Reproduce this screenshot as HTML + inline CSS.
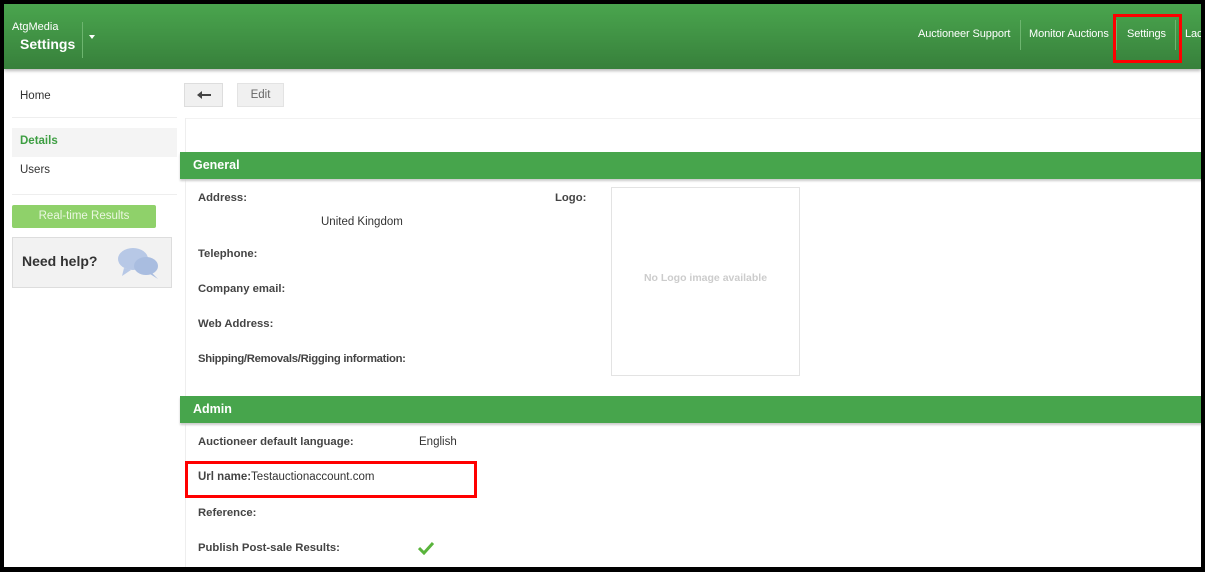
<!DOCTYPE html>
<html><head><style>
*{margin:0;padding:0;box-sizing:border-box}
body{width:1205px;height:572px;overflow:hidden;background:#000;font-family:"Liberation Sans",Arial,sans-serif;position:relative}
.page{position:absolute;left:4px;top:4px;width:1197px;height:563px;background:#fff;overflow:hidden}
.hdr{position:absolute;left:0;top:0;width:1197px;height:65px;background:linear-gradient(#4aa54e,#37803b);box-shadow:0 2px 3px #bbb}
.abs{position:absolute}
.nav{color:#fff;font-size:11px;top:24px;letter-spacing:-0.1px}
.sep{position:absolute;top:16px;width:1px;height:30px;background:#6db56f}
.lbl{position:absolute;font-size:11.3px;font-weight:bold;color:#444}
.val{position:absolute;font-size:11.5px;color:#333}
.bar{position:absolute;left:176px;width:1030px;height:27px;background:#47a54c;color:#fff;font-weight:bold;font-size:12.5px;padding:6px 13px;box-shadow:0 2px 2px #ccc}
.red{position:absolute;border:3px solid #f00}
</style></head><body>
<div class="page">
<div class="hdr">
 <div class="abs" style="left:8px;top:17px;color:#fff;font-size:11px">AtgMedia</div>
 <div class="abs" style="left:16px;top:32px;color:#fff;font-size:14px;font-weight:bold">Settings</div>
 <div class="sep" style="left:78px;top:18px;height:36px"></div>
 <div class="abs" style="left:85px;top:31px;width:0;height:0;border-left:3px solid transparent;border-right:3px solid transparent;border-top:4px solid #fff"></div>
 <div class="abs nav" style="left:914px">Auctioneer Support</div>
 <div class="sep" style="left:1016px"></div>
 <div class="abs nav" style="left:1025px">Monitor Auctions</div>
 <div class="sep" style="left:1112px"></div>
 <div class="abs nav" style="left:1123px">Settings</div>
 <div class="sep" style="left:1171px"></div>
 <div class="abs nav" style="left:1181px">Lac</div>
</div>
<div class="red" style="left:1109px;top:10px;width:69px;height:49px"></div>
<div class="abs" style="left:16px;top:86px;font-size:11.5px;color:#333">Home</div>
<div class="abs" style="left:8px;top:113px;width:165px;height:1px;background:#eee"></div>
<div class="abs" style="left:8px;top:124px;width:165px;height:29px;background:#f4f4f4"></div>
<div class="abs" style="left:16px;top:131px;font-size:11.5px;font-weight:bold;color:#3d9e42">Details</div>
<div class="abs" style="left:16px;top:160px;font-size:11.5px;color:#333">Users</div>
<div class="abs" style="left:8px;top:190px;width:165px;height:1px;background:#eee"></div>
<div class="abs" style="left:8px;top:201px;width:144px;height:23px;background:#8fd16a;border-radius:2px;color:#eaf7e0;font-size:11.5px;text-align:center;line-height:23px">Real-time Results</div>
<div class="abs" style="left:8px;top:233px;width:160px;height:51px;background:#f2f2f2;border:1px solid #ddd"></div>
<div class="abs" style="left:18px;top:249px;font-size:14px;font-weight:bold;color:#333">Need help?</div>
<svg class="abs" style="left:112px;top:242px" width="46" height="36"><ellipse cx="17" cy="13" rx="15" ry="11" fill="#b7c8e6"/><path d="M8 22 L6 30 L15 24Z" fill="#b7c8e6"/><ellipse cx="30" cy="20" rx="12" ry="9" fill="#a9bde0"/><path d="M36 27 L42 33 L34 28Z" fill="#a9bde0"/></svg>
<div class="abs" style="left:180px;top:79px;width:39px;height:24px;background:#f0f0f0;border:1px solid #ddd"></div>
<svg class="abs" style="left:193px;top:87px" width="14" height="8"><path d="M0 4 L5 0 L5 3 L14 3 L14 5 L5 5 L5 8Z" fill="#444"/></svg>
<div class="abs" style="left:233px;top:79px;width:47px;height:24px;background:#f0f0f0;border:1px solid #e3e3e3;font-size:11.5px;color:#666;text-align:center;line-height:22px">Edit</div>
<div class="abs" style="left:181px;top:114px;width:1020px;height:1px;background:#f2f2f2"></div>
<div class="abs" style="left:181px;top:114px;width:1px;height:460px;background:#eee"></div>
<div class="bar" style="top:148px">General</div>
<div class="lbl" style="left:194px;top:188px">Address:</div>
<div class="val" style="left:317px;top:212px">United Kingdom</div>
<div class="lbl" style="left:194px;top:244px">Telephone:</div>
<div class="lbl" style="left:194px;top:279px">Company email:</div>
<div class="lbl" style="left:194px;top:314px">Web Address:</div>
<div class="lbl" style="left:194px;top:349px;letter-spacing:-0.3px">Shipping/Removals/Rigging information:</div>
<div class="lbl" style="left:551px;top:188px">Logo:</div>
<div class="abs" style="left:607px;top:183px;width:189px;height:189px;border:1px solid #e3e3e3;color:#ccc;font-size:10.5px;font-weight:bold;text-align:center;line-height:180px">No Logo image available</div>
<div class="bar" style="top:392px">Admin</div>
<div class="lbl" style="left:194px;top:432px">Auctioneer default language:</div>
<div class="val" style="left:415px;top:432px">English</div>
<div class="red" style="left:181px;top:457px;width:292px;height:37px"></div>
<div class="abs" style="left:194px;top:467px;font-size:11.5px;color:#333"><b style="color:#444">Url name:</b>Testauctionaccount.com</div>
<div class="lbl" style="left:194px;top:503px">Reference:</div>
<div class="lbl" style="left:194px;top:538px">Publish Post-sale Results:</div>
<svg class="abs" style="left:414px;top:537px" width="16" height="14"><path d="M1 7 L6 12 L15 2" stroke="#5ab43c" stroke-width="3" fill="none"/></svg>
</div>
</body></html>
